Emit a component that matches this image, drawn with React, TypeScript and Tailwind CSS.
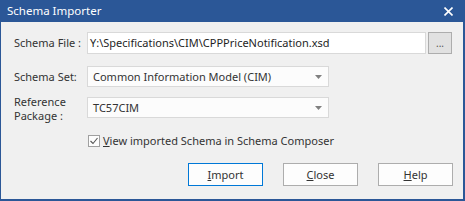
import React from "react";

// Windows-style "Schema Importer" dialog.
function Arrow() {
  return (
    <svg width="7" height="4" viewBox="0 0 7 4" className="shrink-0">
      <path d="M0 0h7L3.5 4z" fill="#808080" />
    </svg>
  );
}

function Select({ value }: { value: string }) {
  return (
    <div className="flex h-[21px] w-[242px] shrink-0 items-center justify-between border border-[#d9d9d9] bg-[#fcfcfc] pl-[5px] pr-[6px]">
      <span>{value}</span>
      <Arrow />
    </div>
  );
}

function Button({ children, primary }: { children: React.ReactNode; primary?: boolean }) {
  return (
    <button
      type="button"
      className={
        "flex h-[23px] w-[75px] items-center justify-center bg-[#fdfdfd] border " +
        (primary ? "border-[#0078d7]" : "border-[#adadad]")
      }
    >
      {children}
    </button>
  );
}

export default function App() {
  return (
    <div
      className="flex h-[201px] w-[465px] flex-col overflow-hidden bg-[#2b5797] text-[11px] leading-[14px] text-[#333333]"
      style={{ fontFamily: '"Noto Sans", "Open Sans", sans-serif' }}
    >
      <div className="flex h-[22px] shrink-0 items-center justify-between pl-[7px] pr-[12px] text-[11.5px] text-white">
        <span>Schema Importer</span>
        <svg width="9" height="9" viewBox="0 0 9 9">
          <path d="M0.5 0.5l8 8M8.5 0.5l-8 8" stroke="#fff" strokeWidth="1.6" />
        </svg>
      </div>
      <div className="ml-[1px] mr-[2px] mb-[2px] flex flex-1 flex-col bg-[#f0f0f0] pl-[13px] pr-[10px] pt-[10px]">
        <div className="flex h-[22px] items-center">
          <span className="w-[73px] shrink-0 whitespace-nowrap">Schema File :</span>
          <div className="flex h-[22px] w-[339px] shrink-0 items-center border border-[#d9d9d9] bg-white pl-[2px] text-[#1e1e1e]">
            Y:\Specifications\CIM\CPPPriceNotification.xsd
          </div>
          <div className="ml-[2px] flex h-[22px] w-[24px] shrink-0 items-end justify-center border border-[#adadad] bg-[#e1e1e1] pb-[5px] text-[10px] leading-none text-[#555]">
            ...
          </div>
        </div>
        <div className="mt-[12px] flex h-[21px] items-center">
          <span className="w-[73px] shrink-0">Schema Set:</span>
          <Select value="Common Information Model (CIM)" />
        </div>
        <div className="mt-[10px] flex h-[21px] items-start">
          <span className="-mt-[2px] w-[73px] shrink-0 leading-[13.5px]">
            Reference
            <br />
            Package :
          </span>
          <Select value="TC57CIM" />
        </div>
        <div className="mt-[16px] flex h-[13px] items-center pl-[74px]">
          <span className="flex h-[12px] w-[12px] shrink-0 items-center justify-center border border-[#a0a0a0] bg-[#fdfdfd]">
            <svg width="10" height="10" viewBox="0 0 10 10">
              <path d="M1.5 5l2.5 2.5L8.5 2" fill="none" stroke="#555" strokeWidth="1.1" />
            </svg>
          </span>
          <span className="ml-[3px] whitespace-nowrap">
            <u>V</u>iew imported Schema in Schema Composer
          </span>
        </div>
        <div className="mt-[16px] flex justify-end gap-[20px]">
          <Button primary>
            <u>I</u>mport
          </Button>
          <Button>
            <u>C</u>lose
          </Button>
          <Button>
            <u>H</u>elp
          </Button>
        </div>
      </div>
    </div>
  );
}
